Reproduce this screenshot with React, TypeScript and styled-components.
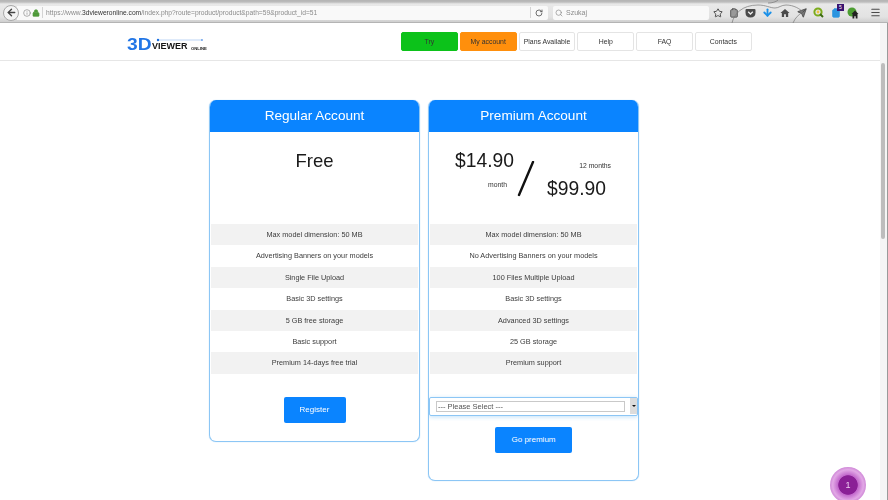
import React from 'react';
import styled, { createGlobalStyle } from 'styled-components';
import { ArrowDown, ArrowLeft, Info, Lock, RotateCw, Search, Star, Menu, Clipboard, Send } from 'lucide-react';

const GlobalStyle = createGlobalStyle`
  html, body {
    margin: 0;
    padding: 0;
    height: 100%;
    background: #fff;
    font-family: "Liberation Sans", Arial, sans-serif;
  }
`;

const Page = styled.div`
  width: 888px;
  height: 500px;
  overflow: hidden;
  position: relative;
  display: flex;
  flex-direction: column;
  opacity: 0.999;
`;

const Toolbar = styled.div`
  height: 23px;
  flex: none;
  box-sizing: border-box;
  position: relative;
  display: flex;
  align-items: center;
  padding: 3px 0 0 3px;
  background: linear-gradient(#b4b4b4 0, #bcbcbc 2px, #e9e9e9 4px, #e2e2e2 17px, #cfcfcf 100%);
  border-bottom: 1px solid #b4b4b4;
`;

const BackButton = styled.div`
  width: 16px;
  height: 16px;
  flex: none;
  box-sizing: border-box;
  position: relative;
  z-index: 1;
  border-radius: 50%;
  background: #f4f4f4;
  border: 1px solid #a8a8a8;
  display: flex;
  align-items: center;
  justify-content: center;
  color: #444;
`;

const UrlBar = styled.div`
  width: 531px;
  height: 14px;
  margin-left: -2px;
  flex: none;
  box-sizing: border-box;
  background: #f9f9f9;
  display: flex;
  align-items: center;
  padding: 0 5px 0 6px;
  font-size: 6.7px;
  color: #8b8b8b;
  white-space: nowrap;
  border-radius: 0 2px 2px 0;
  gap: 1px;
  b {
    font-weight: 400;
    color: #333;
  }
`;

const UrlDivider = styled.span`
  width: 1px;
  height: 11px;
  margin: 0 2px 0 1px;
  background: #d4d4d4;
`;

const UrlText = styled.span`
  flex: 1;
`;

const ReloadIcon = styled(RotateCw)`
  margin-left: 1px;
  flex: none;
`;

const SearchBar = styled.div`
  width: 156px;
  height: 14px;
  margin-left: 5px;
  flex: none;
  box-sizing: border-box;
  background: #f9f9f9;
  border-radius: 2px;
  display: flex;
  align-items: center;
  gap: 3px;
  padding-left: 2px;
  font-size: 7px;
  color: #8a8a8a;
`;

const ToolIcons = styled.div`
  display: flex;
  align-items: center;
  margin-left: 1px;
  flex: 1;
`;

const ToolSlot = styled.span<{ $w: number; $color?: string }>`
  width: ${(p) => p.$w}px;
  flex: none;
  display: flex;
  justify-content: center;
  align-items: center;
  position: relative;
  color: ${(p) => p.$color || '#4a4a4a'};
`;

const ExtBadge = styled.span`
  position: absolute;
  top: -4px;
  right: 0;
  width: 7px;
  height: 7px;
  background: #3a1370;
  color: #fff;
  font-size: 5px;
  line-height: 7px;
  text-align: center;
`;

const Squiggle = styled.svg`
  position: absolute;
  left: 700px;
  top: 0;
  pointer-events: none;
`;

const Viewport = styled.div`
  flex: 1;
  display: flex;
  min-height: 0;
`;

const Content = styled.div`
  flex: 1;
  min-width: 0;
`;

const ScrollTrack = styled.div`
  width: 8px;
  flex: none;
  padding: 40px 2px 0 1px;
  background: #f5f5f5;
  border-right: 1px solid #9a9a9a;
  box-sizing: border-box;
`;

const ScrollThumb = styled.div`
  height: 176px;
  background: #bdbdbd;
  border-radius: 3px;
`;

const Header = styled.header`
  height: 38px;
  box-sizing: border-box;
  display: flex;
  align-items: center;
  padding: 0 0 0 127px;
  border-bottom: 1px solid #e6e6e6;
`;

const Logo = styled.div`
  width: 274px;
  flex: none;
  display: flex;
  align-items: flex-end;
  height: 14px;
  margin-top: 4px;
  position: relative;
  line-height: 1;
  white-space: nowrap;
`;

const LogoMark = styled.span`
  font-size: 16px;
  font-weight: 700;
  color: #2276e6;
  display: inline-block;
  transform: scaleX(1.2);
  transform-origin: left bottom;
  width: 25px;
  line-height: 13px;
`;

const LogoWord = styled.span`
  font-size: 9px;
  font-weight: 700;
  color: #151515;
  line-height: 10px;
  display: inline-block;
  width: 39px;
`;

const LogoSub = styled.span`
  font-size: 4.2px;
  font-weight: 700;
  color: #222;
  line-height: 5px;
`;

const LogoLine = styled.svg`
  position: absolute;
  left: 29px;
  top: 1px;
`;

const Nav = styled.nav`
  display: flex;
  gap: 2px;
`;

const NavButton = styled.a<{ $bg?: string }>`
  width: 56.8px;
  height: 19px;
  box-sizing: border-box;
  display: flex;
  align-items: center;
  justify-content: center;
  font-size: 6.9px;
  color: #333;
  border-radius: 2px;
  background: ${(p) => p.$bg || '#fff'};
  border: 1px solid ${(p) => p.$bg || '#e4e4e4'};
`;

const Plans = styled.main`
  display: flex;
  align-items: flex-start;
  gap: 8px;
  padding: 39px 0 0 209px;
`;

const Card = styled.section<{ $h: number }>`
  width: 211px;
  height: ${(p) => p.$h}px;
  box-sizing: border-box;
  border: 1px solid #8cc6f5;
  border-top: none;
  border-radius: 7px;
  box-shadow: 0 0 1px #8cc6f5;
  overflow: hidden;
  position: relative;
  display: flex;
  flex-direction: column;
  align-items: center;
`;

const CardTitle = styled.h2`
  margin: 0 -1px;
  align-self: stretch;
  height: 32px;
  flex: none;
  background: #0a84ff;
  color: #fff;
  font-size: 13.6px;
  font-weight: 400;
  line-height: 32px;
  text-align: center;
`;

const PriceBox = styled.div`
  height: 92px;
  flex: none;
  align-self: stretch;
`;

const FreePrice = styled.div`
  font-size: 18.5px;
  color: #1a1a1a;
  text-align: center;
  padding-top: 18px;
  line-height: 22px;
`;

const PriceGrid = styled.div`
  display: grid;
  grid-template-columns: 85px 24px 1fr;
  height: 100%;
  color: #1a1a1a;
`;

const PriceCol = styled.div<{ $gap: number; $top: number }>`
  display: flex;
  flex-direction: column;
  align-items: flex-end;
  gap: ${(p) => p.$gap}px;
  padding-top: ${(p) => p.$top}px;
`;

const PriceValue = styled.span<{ $inset?: number }>`
  font-size: 19.3px;
  line-height: 22px;
  padding-right: ${(p) => p.$inset || 0}px;
`;

const PriceNote = styled.span<{ $inset?: number }>`
  font-size: 6.8px;
  line-height: 8px;
  color: #333;
  padding-right: ${(p) => p.$inset || 0}px;
`;

const Slash = styled.svg`
  margin: 29px 0 0 3px;
`;

const RightPrice = styled(PriceCol)`
  padding-right: 27px;
`;

const FeatureList = styled.ul`
  list-style: none;
  margin: 0;
  padding: 0 1px;
  align-self: stretch;
  flex: none;
`;

const Feature = styled.li`
  height: 21.4px;
  line-height: 21.4px;
  font-size: 7.3px;
  color: #3c3c3c;
  text-align: center;
  &:nth-child(odd) {
    background: #f2f2f2;
  }
`;

const CtaButton = styled.button<{ $w: number; $h: number; $mt: number }>`
  width: ${(p) => p.$w}px;
  height: ${(p) => p.$h}px;
  margin-top: ${(p) => p.$mt}px;
  flex: none;
  padding: 0;
  border: none;
  border-radius: 2px;
  background: #0a84ff;
  color: #fff;
  font-family: inherit;
  font-size: 8px;
  font-weight: 400;
`;

const SelectRow = styled.div`
  align-self: stretch;
  height: 19px;
  margin-top: 23px;
  flex: none;
  box-sizing: border-box;
  border: 1px solid #8cc6f5;
  border-radius: 2px;
  box-shadow: 0 1px 4px rgba(120, 190, 245, 0.45);
  display: flex;
  align-items: center;
  padding-left: 6px;
  background: #fff;
`;

const PlanSelect = styled.select`
  width: 189px;
  height: 11px;
  flex: none;
  box-sizing: border-box;
  appearance: none;
  padding: 0 0 0 1px;
  border: 1px solid #c9c9c9;
  border-radius: 0;
  background: #fff;
  font-family: inherit;
  font-size: 7.5px;
  line-height: 9px;
  color: #555;
`;

const SelectArrow = styled.span`
  width: 7px;
  height: 16px;
  margin-left: auto;
  flex: none;
  background: #dcdcdc;
  display: flex;
  align-items: center;
  justify-content: center;
  &::after {
    content: '';
    border-left: 2px solid transparent;
    border-right: 2px solid transparent;
    border-top: 2px solid #111;
  }
`;

const Bubble = styled.div`
  position: absolute;
  left: 830px;
  top: 467px;
  width: 36px;
  height: 36px;
  border-radius: 50%;
  background: radial-gradient(circle closest-side, #8a1f96 0, #8a1f96 52%, #c268cc 56%, #e2a8e6 85%, #d08ad8 100%);
  color: #eecdf0;
  font-size: 9px;
  display: flex;
  align-items: center;
  justify-content: center;
`;

const regular = [
  'Max model dimension: 50 MB',
  'Advertising Banners on your models',
  'Single File Upload',
  'Basic 3D settings',
  '5 GB free storage',
  'Basic support',
  'Premium 14-days free trial',
];

const premium = [
  'Max model dimension: 50 MB',
  'No Advertising Banners on your models',
  '100 Files Multiple Upload',
  'Basic 3D settings',
  'Advanced 3D settings',
  '25 GB storage',
  'Premium support',
];

const housePath = 'M5 1 L0 5.5 H1.5 V10 H4 V7 H6 V10 H8.5 V5.5 H10 Z';

const PocketGlyph = () => (
  <svg width="11" height="10" viewBox="0 0 11 10">
    <path d="M1.5 1 H9.5 Q10.5 1 10.5 2 V4.5 Q10.5 9.5 5.5 9.5 Q0.5 9.5 0.5 4.5 V2 Q0.5 1 1.5 1 Z" fill="#4a4a4a" />
    <path d="M3.2 3.8 L5.5 6 L7.8 3.8" fill="none" stroke="#eee" strokeWidth="1.3" />
  </svg>
);

const HouseGlyph = () => (
  <svg width="10" height="10" viewBox="0 0 10 11">
    <path d={housePath} fill="currentColor" />
  </svg>
);

const QuickGlyph = () => (
  <svg width="11" height="11" viewBox="0 0 11 11" fill="none">
    <circle cx="5" cy="5" r="3.6" stroke="#7cab1c" strokeWidth="2" />
    <path d="M7 7 L10 10" stroke="#3d6b12" strokeWidth="2" />
    <circle cx="5" cy="5" r="1.4" fill="#f0c040" />
  </svg>
);

const GreenHomeGlyph = () => (
  <svg width="12" height="12" viewBox="0 0 12 12">
    <circle cx="5" cy="5" r="4.5" fill="#4d9e32" />
    <path d="M8 3.5 L4.5 7 H5.5 V11.5 H7.3 V9.2 H8.7 V11.5 H10.5 V7 H11.5 Z" fill="#222" />
  </svg>
);

export default function App() {
  return (
    <Page>
      <GlobalStyle />
      <Toolbar>
        <BackButton>
          <ArrowLeft size={11} strokeWidth={3} />
        </BackButton>
        <UrlBar>
          <Info size={8} color="#888" />
          <Lock size={8} color="#4f9a3a" fill="#4f9a3a" />
          <UrlDivider />
          <UrlText>
            https://www.<b>3dvieweronline.com</b>/index.php?route=product/product&amp;path=59&amp;product_id=51
          </UrlText>
          <UrlDivider />
          <ReloadIcon size={8} color="#555" strokeWidth={2.5} />
        </UrlBar>
        <SearchBar>
          <Search size={8} color="#888" />
          Szukaj
        </SearchBar>
        <ToolIcons>
          <ToolSlot $w={16}><Star size={10} color="#333" /></ToolSlot>
          <ToolSlot $w={16}><Clipboard size={10} fill="#999" /></ToolSlot>
          <ToolSlot $w={17}><PocketGlyph /></ToolSlot>
          <ToolSlot $w={17} $color="#1a90e8"><ArrowDown size={11} strokeWidth={4} /></ToolSlot>
          <ToolSlot $w={17}><HouseGlyph /></ToolSlot>
          <ToolSlot $w={17}><Send size={10} fill="#777" /></ToolSlot>
          <ToolSlot $w={17}><QuickGlyph /></ToolSlot>
          <ToolSlot $w={17} $color="#2a94e0">
            <Clipboard size={10} fill="#2a94e0" />
            <ExtBadge>5</ExtBadge>
          </ToolSlot>
          <ToolSlot $w={18}><GreenHomeGlyph /></ToolSlot>
          <ToolSlot $w={27}><Menu size={11} strokeWidth={2.5} /></ToolSlot>
        </ToolIcons>
        <Squiggle width={188} height={23} viewBox="0 0 188 23" fill="none" stroke="#777" strokeWidth="0.7">
          <path d="M32 23 C34 14 42 5 58 5 C66 5 70 8 75 8 C79 8 81 5 86 5 C94 5 100 9 103 12" />
          <path d="M93 23 C95 18 99 14 103 12" />
          <path d="M68 3 C72 3 76 2 78 0" />
        </Squiggle>
      </Toolbar>
      <Viewport>
        <Content>
          <Header>
            <Logo>
              <LogoLine width={48} height={4} viewBox="0 0 48 4">
                <circle cx="2" cy="2" r="1.2" fill="#1a6fe0" />
                <line x1="3" y1="2" x2="46" y2="2" stroke="#7aa9e8" strokeWidth="0.5" />
                <circle cx="46" cy="2" r="0.8" fill="#1a6fe0" />
              </LogoLine>
              <LogoMark>3D</LogoMark>
              <LogoWord>VIEWER</LogoWord>
              <LogoSub>ONLINE</LogoSub>
            </Logo>
            <Nav>
              <NavButton $bg="#0cc21a">Try</NavButton>
              <NavButton $bg="#ff8f0c">My account</NavButton>
              <NavButton>Plans Available</NavButton>
              <NavButton>Help</NavButton>
              <NavButton>FAQ</NavButton>
              <NavButton>Contacts</NavButton>
            </Nav>
          </Header>
          <Plans>
            <Card $h={342}>
              <CardTitle>Regular Account</CardTitle>
              <PriceBox>
                <FreePrice>Free</FreePrice>
              </PriceBox>
              <FeatureList>
                {regular.map((f) => (
                  <Feature key={f}>{f}</Feature>
                ))}
              </FeatureList>
              <CtaButton $w={62} $h={26} $mt={23}>Register</CtaButton>
            </Card>
            <Card $h={381}>
              <CardTitle>Premium Account</CardTitle>
              <PriceBox>
                <PriceGrid>
                  <PriceCol $gap={9} $top={18}>
                    <PriceValue>$14.90</PriceValue>
                    <PriceNote $inset={7}>month</PriceNote>
                  </PriceCol>
                  <Slash width={18} height={36} viewBox="0 0 18 36">
                    <line x1="16" y1="1" x2="2" y2="34" stroke="#111" strokeWidth="2.4" strokeLinecap="round" />
                  </Slash>
                  <RightPrice $gap={8} $top={30}>
                    <PriceNote>12 months</PriceNote>
                    <PriceValue $inset={5}>$99.90</PriceValue>
                  </RightPrice>
                </PriceGrid>
              </PriceBox>
              <FeatureList>
                {premium.map((f) => (
                  <Feature key={f}>{f}</Feature>
                ))}
              </FeatureList>
              <SelectRow>
                <PlanSelect defaultValue="">
                  <option value="">--- Please Select ---</option>
                </PlanSelect>
                <SelectArrow />
              </SelectRow>
              <CtaButton $w={77} $h={26} $mt={11}>Go premium</CtaButton>
            </Card>
          </Plans>
        </Content>
        <ScrollTrack>
          <ScrollThumb />
        </ScrollTrack>
      </Viewport>
      <Bubble>1</Bubble>
    </Page>
  );
}
